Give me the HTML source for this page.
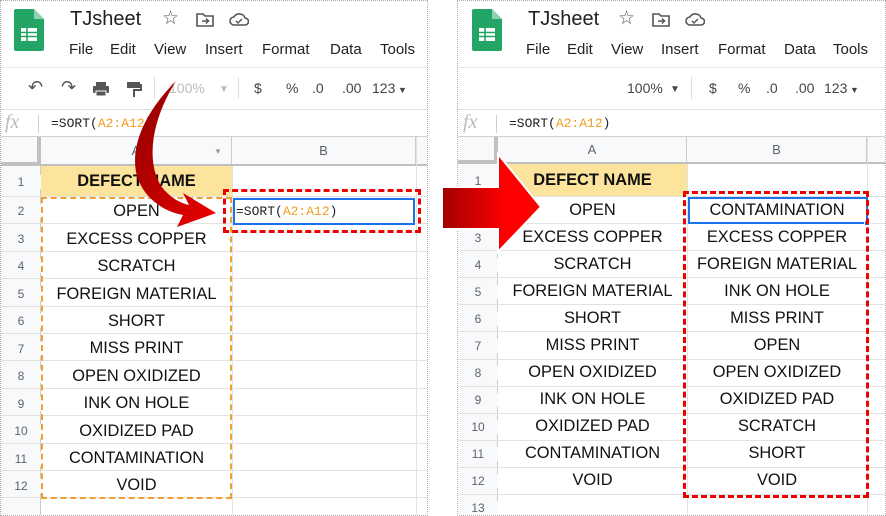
<!DOCTYPE html>
<html><head><meta charset="utf-8"><style>
*{margin:0;padding:0;box-sizing:border-box}
body{width:886px;height:516px;background:#fff;position:relative;overflow:hidden;font-family:"Liberation Sans",Arial,sans-serif;color:#202124}
.a{position:absolute}
.panel{position:absolute;top:0;height:516px;border:1px dotted #aaa;overflow:hidden;background:#fff}
.title{font-size:20px;color:#202124}
.menu{font-size:15px;color:#202124;top:40px}
.tb{font-size:14px;color:#444;top:79px}
.fx{font-family:"Liberation Serif",serif;font-style:italic;color:#bbb;font-size:20px}
.mono{font-family:"Liberation Mono",monospace;font-size:13px}
.or{color:#f29c1f}
.hdr{background:#f8f9fa;border-bottom:2px solid #c0c0c0;font-size:13px;color:#5f6368;text-align:center}
.cell{font-size:16.4px;text-align:center;white-space:nowrap;color:#111}
.rn{font-size:12px;color:#5f6368;text-align:center;background:#f8f9fa}
.hl{border-bottom:1px solid #e2e2e2}
</style></head><body>

<!-- LEFT PANEL -->
<div class="panel" style="left:0;width:428px">
 <svg class="a" style="left:13px;top:8px" width="30" height="42" viewBox="0 0 30 42"><path d="M2 0h18l10 10v30a2 2 0 0 1-2 2H2a2 2 0 0 1-2-2V2a2 2 0 0 1 2-2z" fill="#23a566"/><path d="M20 0v10h10z" fill="#8ed1b1"/><rect x="7" y="19" width="16" height="13" fill="#fff"/><path d="M7 23.5h16M7 27.5h16M13 19v13" stroke="#23a566" stroke-width="1.6"/></svg>
 <div class="a title" style="left:69px;top:7px">TJsheet</div>
 <div class="a" style="left:161px;top:6px;font-size:19px;color:#555">☆</div>
 <svg class="a" style="left:195px;top:11px" width="18" height="15"><path d="M1 2h6l2 2h8v10H1z" fill="none" stroke="#555" stroke-width="1.6"/><path d="M6 9h6M10 6.5l2.5 2.5-2.5 2.5" fill="none" stroke="#555" stroke-width="1.5"/></svg>
 <svg class="a" style="left:228px;top:11px" width="20" height="14"><path d="M5 13a4 4 0 0 1 0-8 6 6 0 0 1 11 1 3.5 3.5 0 0 1 0 7z" fill="none" stroke="#555" stroke-width="1.6"/><path d="M7 9l2 2 4-4" fill="none" stroke="#555" stroke-width="1.4"/></svg>
 <div class="a menu" style="left:68px">File</div><div class="a menu" style="left:109px">Edit</div><div class="a menu" style="left:153px">View</div><div class="a menu" style="left:204px">Insert</div><div class="a menu" style="left:261px">Format</div><div class="a menu" style="left:329px">Data</div><div class="a menu" style="left:379px">Tools</div>
 <div class="a" style="left:0;top:66px;width:428px;border-top:1px solid #e8e8e8"></div>
 <div class="a tb" style="left:27px;font-size:18px;top:76px;color:#555">↶</div><div class="a tb" style="left:60px;font-size:18px;top:76px;color:#555">↷</div>
 <svg class="a" style="left:91px;top:80px" width="18" height="16"><rect x="4" y="1" width="10" height="4" fill="#555"/><rect x="1" y="5" width="16" height="7" rx="1" fill="#555"/><rect x="4" y="10" width="10" height="5" fill="#555" stroke="#fff"/></svg>
 <svg class="a" style="left:125px;top:80px" width="16" height="17"><rect x="1" y="1" width="13" height="6" fill="#555"/><path d="M14 4h1v5H8v7" fill="none" stroke="#555" stroke-width="2"/></svg>
 <div class="a" style="left:153px;top:76px;height:22px;border-left:1px solid #ddd"></div>
 <div class="a tb" style="left:168px;color:#bbb">100%</div><div class="a tb" style="left:218px;color:#bbb;font-size:10px;top:83px">▼</div>
 <div class="a" style="left:237px;top:76px;height:22px;border-left:1px solid #ddd"></div>
 <div class="a tb" style="left:253px">$</div><div class="a tb" style="left:285px">%</div><div class="a tb" style="left:311px">.0</div><div class="a tb" style="left:341px">.00</div><div class="a tb" style="left:371px">123</div><div class="a" style="left:397px;top:84px;font-size:9px;color:#444">▼</div>
 <div class="a" style="left:0;top:108px;width:428px;border-top:1px solid #e0e0e0"></div>
 <div class="a fx" style="left:4px;top:110px">fx</div>
 <div class="a" style="left:37px;top:114px;height:18px;border-left:1px solid #ccc"></div>
 <div class="a mono" style="left:50px;top:115px">=SORT(<span class="or">A2:A12</span>)</div>
 <div class="a" style="left:0;top:135px;width:428px;border-top:1px solid #d0d0d0"></div>
 <div class="a hdr" style="left:0;top:136px;width:428px;height:29px"></div>
 <div class="a" style="left:0;top:136px;width:40px;height:29px;background:#f8f9fa;border-right:4px solid #c0c0c0;border-bottom:4px solid #c0c0c0"></div>
 <div class="a" style="left:40px;top:136px;width:191px;height:27px;text-align:center;line-height:27px;font-size:13px;color:#5f6368;border-right:1px solid #ccc">A</div>
 <div class="a" style="left:213px;top:146px;font-size:8px;color:#999">▼</div>
 <div class="a" style="left:231px;top:136px;width:184px;height:27px;text-align:center;line-height:27px;font-size:13px;color:#5f6368;border-right:1px solid #ccc">B</div>
 <div class="a" style="left:0;top:165px;width:40px;height:351px;background:#f8f9fa;border-right:1px solid #ccc"></div>
 <div class="a" style="left:40px;top:165px;width:191px;height:31px;background:#fde49c"></div>
 <div class="a" style="left:415px;top:136px;height:380px;border-left:1px solid #e2e2e2"></div>
 <div class="a" style="left:231px;top:165px;height:351px;border-left:1px solid #e2e2e2"></div>
 <div class="a cell" style="left:40px;top:171px;width:191px;font-weight:bold">DEFECT NAME</div>
 <div class="a rn" style="left:0;top:174px;width:40px">1</div>
 <div class="a hl" style="left:0;top:165px;width:428px;height:31px"></div>
 <div class="a hl" style="left:0;top:196px;width:428px;height:27.4px"></div><div class="a rn" style="left:0;top:203px;width:40px">2</div><div class="a cell" style="left:40px;top:201px;width:191px">OPEN</div>
 <div class="a hl" style="left:0;top:223.4px;width:428px;height:27.4px"></div><div class="a rn" style="left:0;top:231px;width:40px">3</div><div class="a cell" style="left:40px;top:229px;width:191px">EXCESS COPPER</div>
 <div class="a hl" style="left:0;top:250.8px;width:428px;height:27.4px"></div><div class="a rn" style="left:0;top:258px;width:40px">4</div><div class="a cell" style="left:40px;top:256px;width:191px">SCRATCH</div>
 <div class="a hl" style="left:0;top:278.2px;width:428px;height:27.4px"></div><div class="a rn" style="left:0;top:286px;width:40px">5</div><div class="a cell" style="left:40px;top:284px;width:191px">FOREIGN MATERIAL</div>
 <div class="a hl" style="left:0;top:305.6px;width:428px;height:27.4px"></div><div class="a rn" style="left:0;top:313px;width:40px">6</div><div class="a cell" style="left:40px;top:311px;width:191px">SHORT</div>
 <div class="a hl" style="left:0;top:333px;width:428px;height:27.4px"></div><div class="a rn" style="left:0;top:341px;width:40px">7</div><div class="a cell" style="left:40px;top:338px;width:191px">MISS PRINT</div>
 <div class="a hl" style="left:0;top:360.4px;width:428px;height:27.4px"></div><div class="a rn" style="left:0;top:368px;width:40px">8</div><div class="a cell" style="left:40px;top:366px;width:191px">OPEN OXIDIZED</div>
 <div class="a hl" style="left:0;top:387.8px;width:428px;height:27.4px"></div><div class="a rn" style="left:0;top:396px;width:40px">9</div><div class="a cell" style="left:40px;top:393px;width:191px">INK ON HOLE</div>
 <div class="a hl" style="left:0;top:415.2px;width:428px;height:27.4px"></div><div class="a rn" style="left:0;top:423px;width:40px">10</div><div class="a cell" style="left:40px;top:421px;width:191px">OXIDIZED PAD</div>
 <div class="a hl" style="left:0;top:442.6px;width:428px;height:27.4px"></div><div class="a rn" style="left:0;top:451px;width:40px">11</div><div class="a cell" style="left:40px;top:448px;width:191px">CONTAMINATION</div>
 <div class="a hl" style="left:0;top:470px;width:428px;height:27.4px"></div><div class="a rn" style="left:0;top:478px;width:40px">12</div><div class="a cell" style="left:40px;top:475px;width:191px">VOID</div>
 <div class="a" style="left:40px;top:196px;width:191px;height:302px;border:2px dashed #f0a030"></div>
 <div class="a" style="left:232px;top:197px;width:182px;height:27px;border:2px solid #1a73e8;background:#fff"></div>
 <div class="a mono" style="left:235px;top:203px">=SORT(<span class="or">A2:A12</span>)</div>
 <div class="a" style="left:222px;top:188px;width:198px;height:44px;border:3px dashed #e00"></div>
 <svg class="a" style="left:120px;top:80px" width="110" height="150"><defs><linearGradient id="g1" x1="0" y1="0" x2="1" y2="1"><stop offset="0" stop-color="#8b0000"/><stop offset="1" stop-color="#e00"/></linearGradient></defs><path d="M55 0C30 40 25 80 40 105C50 118 60 122 68 124L62 112L95 132L56 146L62 134C40 130 22 115 16 95C8 65 25 30 55 0z" fill="url(#g1)"/></svg>
</div>

<!-- RIGHT PANEL -->
<div class="panel" style="left:457px;width:429px">
 <svg class="a" style="left:14px;top:8px" width="30" height="42" viewBox="0 0 30 42"><path d="M2 0h18l10 10v30a2 2 0 0 1-2 2H2a2 2 0 0 1-2-2V2a2 2 0 0 1 2-2z" fill="#23a566"/><path d="M20 0v10h10z" fill="#8ed1b1"/><rect x="7" y="19" width="16" height="13" fill="#fff"/><path d="M7 23.5h16M7 27.5h16M13 19v13" stroke="#23a566" stroke-width="1.6"/></svg>
 <div class="a title" style="left:70px;top:7px">TJsheet</div>
 <div class="a" style="left:160px;top:6px;font-size:19px;color:#555">☆</div>
 <svg class="a" style="left:194px;top:11px" width="18" height="15"><path d="M1 2h6l2 2h8v10H1z" fill="none" stroke="#555" stroke-width="1.6"/><path d="M6 9h6M10 6.5l2.5 2.5-2.5 2.5" fill="none" stroke="#555" stroke-width="1.5"/></svg>
 <svg class="a" style="left:227px;top:11px" width="20" height="14"><path d="M5 13a4 4 0 0 1 0-8 6 6 0 0 1 11 1 3.5 3.5 0 0 1 0 7z" fill="none" stroke="#555" stroke-width="1.6"/><path d="M7 9l2 2 4-4" fill="none" stroke="#555" stroke-width="1.4"/></svg>
 <div class="a menu" style="left:68px">File</div><div class="a menu" style="left:109px">Edit</div><div class="a menu" style="left:153px">View</div><div class="a menu" style="left:203px">Insert</div><div class="a menu" style="left:260px">Format</div><div class="a menu" style="left:326px">Data</div><div class="a menu" style="left:375px">Tools</div>
 <div class="a" style="left:0;top:66px;width:429px;border-top:1px solid #e8e8e8"></div>
 <div class="a tb" style="left:169px">100%</div><div class="a tb" style="left:212px;font-size:10px;top:83px">▼</div>
 <div class="a" style="left:233px;top:76px;height:22px;border-left:1px solid #ddd"></div>
 <div class="a tb" style="left:251px">$</div><div class="a tb" style="left:280px">%</div><div class="a tb" style="left:308px">.0</div><div class="a tb" style="left:337px">.00</div><div class="a tb" style="left:366px">123</div><div class="a" style="left:392px;top:84px;font-size:9px;color:#444">▼</div>
 <div class="a" style="left:0;top:108px;width:429px;border-top:1px solid #e0e0e0"></div>
 <div class="a fx" style="left:5px;top:110px">fx</div>
 <div class="a" style="left:38px;top:114px;height:18px;border-left:1px solid #ccc"></div>
 <div class="a mono" style="left:51px;top:115px">=SORT(<span class="or">A2:A12</span>)</div>
 <div class="a" style="left:0;top:135px;width:429px;border-top:1px solid #d0d0d0"></div>
 <div class="a hdr" style="left:0;top:136px;width:429px;height:27px"></div>
 <div class="a" style="left:0;top:136px;width:40px;height:27px;background:#f8f9fa;border-right:4px solid #c0c0c0;border-bottom:4px solid #c0c0c0"></div>
 <div class="a" style="left:40px;top:136px;width:189px;height:25px;text-align:center;line-height:25px;font-size:13px;color:#5f6368;border-right:1px solid #ccc">A</div>
 <div class="a" style="left:229px;top:136px;width:180px;height:25px;text-align:center;line-height:25px;font-size:13px;color:#5f6368;border-right:1px solid #ccc">B</div>
 <div class="a" style="left:0;top:163px;width:40px;height:353px;background:#f8f9fa;border-right:1px solid #ccc"></div>
 <div class="a" style="left:40px;top:163px;width:189px;height:33px;background:#fde49c"></div>
 <div class="a" style="left:409px;top:136px;height:380px;border-left:1px solid #e2e2e2"></div>
 <div class="a" style="left:229px;top:163px;height:353px;border-left:1px solid #e2e2e2"></div>
 <div class="a cell" style="left:40px;top:170px;width:189px;font-weight:bold">DEFECT NAME</div>
 <div class="a rn" style="left:0;top:173px;width:40px">1</div>
 <div class="a hl" style="left:0;top:163px;width:429px;height:33px"></div>
 <div class="a hl" style="left:0;top:196px;width:429px;height:27.1px"></div><div class="a rn" style="left:0;top:203px;width:40px">2</div><div class="a cell" style="left:40px;top:200px;width:189px">OPEN</div><div class="a cell" style="left:229px;top:200px;width:180px">CONTAMINATION</div>
 <div class="a hl" style="left:0;top:223.1px;width:429px;height:27.1px"></div><div class="a rn" style="left:0;top:230px;width:40px">3</div><div class="a cell" style="left:40px;top:227px;width:189px">EXCESS COPPER</div><div class="a cell" style="left:229px;top:227px;width:180px">EXCESS COPPER</div>
 <div class="a hl" style="left:0;top:250.2px;width:429px;height:27.1px"></div><div class="a rn" style="left:0;top:257px;width:40px">4</div><div class="a cell" style="left:40px;top:254px;width:189px">SCRATCH</div><div class="a cell" style="left:229px;top:254px;width:180px">FOREIGN MATERIAL</div>
 <div class="a hl" style="left:0;top:277.3px;width:429px;height:27.1px"></div><div class="a rn" style="left:0;top:284px;width:40px">5</div><div class="a cell" style="left:40px;top:281px;width:189px">FOREIGN MATERIAL</div><div class="a cell" style="left:229px;top:281px;width:180px">INK ON HOLE</div>
 <div class="a hl" style="left:0;top:304.4px;width:429px;height:27.1px"></div><div class="a rn" style="left:0;top:311px;width:40px">6</div><div class="a cell" style="left:40px;top:308px;width:189px">SHORT</div><div class="a cell" style="left:229px;top:308px;width:180px">MISS PRINT</div>
 <div class="a hl" style="left:0;top:331.5px;width:429px;height:27.1px"></div><div class="a rn" style="left:0;top:338px;width:40px">7</div><div class="a cell" style="left:40px;top:335px;width:189px">MISS PRINT</div><div class="a cell" style="left:229px;top:335px;width:180px">OPEN</div>
 <div class="a hl" style="left:0;top:358.6px;width:429px;height:27.1px"></div><div class="a rn" style="left:0;top:365px;width:40px">8</div><div class="a cell" style="left:40px;top:362px;width:189px">OPEN OXIDIZED</div><div class="a cell" style="left:229px;top:362px;width:180px">OPEN OXIDIZED</div>
 <div class="a hl" style="left:0;top:385.7px;width:429px;height:27.1px"></div><div class="a rn" style="left:0;top:392px;width:40px">9</div><div class="a cell" style="left:40px;top:389px;width:189px">INK ON HOLE</div><div class="a cell" style="left:229px;top:389px;width:180px">OXIDIZED PAD</div>
 <div class="a hl" style="left:0;top:412.8px;width:429px;height:27.1px"></div><div class="a rn" style="left:0;top:419px;width:40px">10</div><div class="a cell" style="left:40px;top:416px;width:189px">OXIDIZED PAD</div><div class="a cell" style="left:229px;top:416px;width:180px">SCRATCH</div>
 <div class="a hl" style="left:0;top:439.9px;width:429px;height:27.1px"></div><div class="a rn" style="left:0;top:446px;width:40px">11</div><div class="a cell" style="left:40px;top:443px;width:189px">CONTAMINATION</div><div class="a cell" style="left:229px;top:443px;width:180px">SHORT</div>
 <div class="a hl" style="left:0;top:467px;width:429px;height:27.1px"></div><div class="a rn" style="left:0;top:473px;width:40px">12</div><div class="a cell" style="left:40px;top:470px;width:189px">VOID</div><div class="a cell" style="left:229px;top:470px;width:180px">VOID</div>
 <div class="a rn" style="left:0;top:500px;width:40px">13</div>
 <div class="a" style="left:230px;top:196px;width:180px;height:27px;border:2px solid #1a73e8"></div>
 <div class="a" style="left:406px;top:219px;width:6px;height:6px;background:#1a73e8;border:1px solid #fff"></div>
 <div class="a" style="left:225px;top:190px;width:186px;height:307px;border:3px dashed #e00"></div>
</div>

<!-- BIG ARROW (on top) -->
<svg class="a" style="left:440px;top:150px" width="106" height="106"><defs><linearGradient id="g2" x1="0" x2="1"><stop offset="0" stop-color="#a00000"/><stop offset="0.65" stop-color="#f00"/></linearGradient></defs><path d="M2 37H58V4L101 57L58 102V79H2z" fill="url(#g2)" stroke="#fff" stroke-width="2"/></svg>
</body></html>
